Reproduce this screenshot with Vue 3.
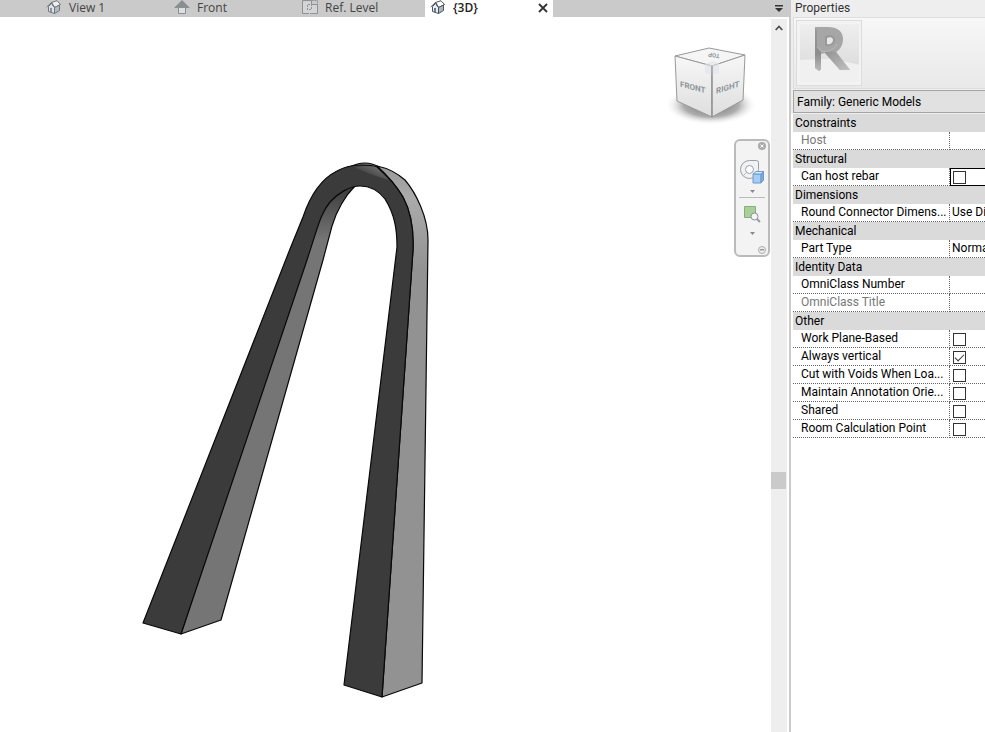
<script setup>
import { ref } from 'vue'

const tabs = [
  { name: 'View 1', icon: 'house' },
  { name: 'Front', icon: 'elevation' },
  { name: 'Ref. Level', icon: 'plan' },
  { name: '{3D}', icon: 'house' }
]
const active = ref('{3D}')

const groups = ref([
  { name: 'Constraints', rows: [{ label: 'Host', muted: true, text: '' }] },
  { name: 'Structural', rows: [{ label: 'Can host rebar', check: false, focused: true }] },
  { name: 'Dimensions', rows: [{ label: 'Round Connector Dimens...', text: 'Use Diameter' }] },
  { name: 'Mechanical', rows: [{ label: 'Part Type', text: 'Normal' }] },
  {
    name: 'Identity Data',
    rows: [
      { label: 'OmniClass Number', text: '' },
      { label: 'OmniClass Title', muted: true, text: '' }
    ]
  },
  {
    name: 'Other',
    rows: [
      { label: 'Work Plane-Based', check: false },
      { label: 'Always vertical', check: true },
      { label: 'Cut with Voids When Loa...', check: false },
      { label: 'Maintain Annotation Orie...', check: false },
      { label: 'Shared', check: false },
      { label: 'Room Calculation Point', check: false }
    ]
  }
])
const idFor = (label) => 'prop-' + label.toLowerCase().replace(/[^a-z]+/g, '-')
</script>

<template>
  <div class="app">
    <main class="workspace">
      <nav class="tabs">
        <button
          v-for="tab in tabs"
          :key="tab.name"
          type="button"
          class="tab"
          :class="{ active: tab.name === active }"
          @click="active = tab.name"
        >
          <svg v-if="tab.icon === 'house'" class="tab-icon" viewBox="0 0 16 15">
            <path d="M2.500 6.500 5.500 3.500 8.500 7.500V13.500L2.500 11.500Z" fill="#e9edf1" stroke="#4c535b" />
            <path d="M5.500 2.500 11 .7 14.500 4.500 8.500 7.500Z" fill="#fff" stroke="#4c535b" stroke-linejoin="round" />
            <path d="M8.500 7.500 13.500 5V10.500L8.500 13.500Z" fill="#a9b6c7" stroke="#4c535b" stroke-linejoin="round" />
            <path d="M.7 7 5.500 2.500 8.500 7.500" fill="none" stroke="#4c535b" />
            <path d="M4 8H6V12.500L4 12Z" fill="#6c7d93" />
          </svg>
          <svg v-else-if="tab.icon === 'elevation'" class="tab-icon" viewBox="0 0 16 15">
            <path d="M8 0 16 8H0Z" fill="#70747b" />
            <path d="M4.500 7.500H11.500V13.500H4.500Z" fill="#e6e8ea" stroke="#70747b" />
          </svg>
          <svg v-else class="tab-icon" viewBox="0 0 16 15">
            <path d="M.5 1.500H9.500V4.500H15.500V13.500H.5Z" fill="#d9dadb" />
            <path d="M5 .5H.5V13.500H5M5 .5H9.500V4.500H15.500V13.500H9.500" fill="none" stroke="#777b80" />
            <path d="M5 13.500H9.500M5.500 10V4.500H9.500V9.500H5.500M9.500 .5H15.500V4.500" fill="none" stroke="#777b80" stroke-dasharray="2 1" />
          </svg>
          <span>{{ tab.name }}</span>
          <svg v-if="tab.name === active" class="close" viewBox="0 0 10 10">
            <path d="M1 1 9 9M9 1 1 9" stroke="#333" stroke-width="1.800" />
          </svg>
        </button>
        <button type="button" class="tab-list" aria-label="Tabs">
          <svg viewBox="0 0 10 8"><path d="M1 0H9V1.500H1ZM1 3H9L5 7Z" fill="#333" /></svg>
        </button>
      </nav>

      <div class="view">
        <div class="canvas">
          <svg class="model" viewBox="0 17 440 700">
            <defs>
              <linearGradient id="inner" x1="0" y1="187" x2="0" y2="240" gradientUnits="userSpaceOnUse">
                <stop offset="0" stop-color="#3a3a3a" />
                <stop offset=".35" stop-color="#505050" />
                <stop offset="1" stop-color="#757575" />
              </linearGradient>
              <linearGradient id="outer" x1="0" y1="166" x2="0" y2="270" gradientUnits="userSpaceOnUse">
                <stop offset="0" stop-color="#999" />
                <stop offset=".3" stop-color="#ababab" />
                <stop offset="1" stop-color="#929292" />
              </linearGradient>
              <linearGradient id="crown" x1="374" y1="166" x2="368" y2="178" gradientUnits="userSpaceOnUse">
                <stop offset="0" stop-color="#6c6c6c" />
                <stop offset="1" stop-color="#3b3b3b" />
              </linearGradient>
            </defs>
            <g stroke="#080808" stroke-width="1.200" stroke-linejoin="round">
              <path d="M181 634 221 620 323 260 332 226C337 210 343 198 355 186L340 190 315 215Z" fill="url(#inner)" />
              <path d="M377 166C387 168 397 173 405 180C416 193 428 217 428 240L422 683 382 697 413 250C414 228 411 212 403 197C397 187 389 177 377 166Z" fill="url(#outer)" />
              <path d="M350 167Q365 159 379 167Z" fill="#777" />
              <path
                d="M143 623 290 249 303 217C311 193 323 178 337 171C344 167 350 165 362 165Q372 165 377 167C389 177 397 187 403 197C411 212 414 228 413 250L382 697 344 685 397 247C397 230 395 215 385 199C378 190 370 186 360 186C350 186 338 193 330 202C321 213 319 223 307 260L181 634Z"
                fill="#3b3b3b"
              />
            </g>
            <path d="M354 167Q366 165 376 167L389 180Q368 174 354 167Z" fill="url(#crown)" />
          </svg>

          <svg class="cube" viewBox="660 40 100 90">
            <defs>
              <radialGradient id="shade">
                <stop offset="0" stop-color="#666" />
                <stop offset=".6" stop-color="#999" stop-opacity=".8" />
                <stop offset="1" stop-color="#fff" stop-opacity="0" />
              </radialGradient>
              <linearGradient id="face" x2="0" y2="1">
                <stop offset="0" stop-color="#f7f7f8" />
                <stop offset="1" stop-color="#dedede" />
              </linearGradient>
            </defs>
            <ellipse cx="711" cy="105" rx="46" ry="20" fill="url(#shade)" />
            <g stroke="#999" stroke-linejoin="round">
              <path d="M675 56 709 48 745 55 712 66Z" fill="#f5f5f6" />
              <path d="M675 56 712 66V117L677 101Z" fill="url(#face)" />
              <path d="M745 55 712 66V117L743 100Z" fill="url(#face)" />
            </g>
            <path d="M705 64 712 61 719 63V73L712 75 705 73Z" fill="#dfe3e8" opacity=".6" />
            <path d="M712 66V117" stroke="#888" />
            <g class="cube-text">
              <text x="-13" transform="translate(693 90) skewY(14)">FRONT</text>
              <text x="-12" transform="translate(728 90) skewY(-17)">RIGHT</text>
              <text class="small" transform="translate(720 54) rotate(188)">TOP</text>
            </g>
          </svg>

          <div class="navbar">
            <button type="button" class="round" aria-label="Close">
              <svg viewBox="0 0 8 8"><circle cx="4" cy="4" r="4" fill="#aaa" /><path d="M2.500 2.500 5.500 5.500M5.500 2.500 2.500 5.500" stroke="#fff" /></svg>
            </button>
            <button type="button" class="tool" aria-label="Wheel">
              <svg class="wheel" viewBox="0 0 26 26">
                <path d="M10.500 1.500H17.500Q19.500 1.500 19.500 3.500V10.500A9 9 0 1 1 10.500 1.500Z" fill="#f1f2f4" stroke="#9a9da3" />
                <circle cx="10.500" cy="10.500" r="4" fill="#fff" stroke="#9a9da3" />
                <path d="M4 17 7.500 13.500M13.500 13.500 16 16" stroke="#b7babf" />
                <path d="M14 15H22V24H14Z" fill="#a9cdf1" stroke="#6a9bd0" />
                <path d="M14 15 17 12.500H24.500L22 15Z" fill="#d8eafb" stroke="#6a9bd0" />
                <path d="M22 15 24.500 12.500V21L22 24Z" fill="#78aade" stroke="#6a9bd0" />
              </svg>
              <svg class="caret" viewBox="0 0 5 3"><path d="M0 0H5L2.500 3Z" fill="#888" /></svg>
            </button>
            <hr />
            <button type="button" class="tool" aria-label="Zoom">
              <svg class="zoom" viewBox="0 0 18 18">
                <path d="M1.500 1.500H12.500V12.500H1.500Z" fill="#a9cf9c" stroke="#86ae79" />
                <path d="M13 13 17 17" stroke="#999" stroke-width="2" />
                <circle cx="11.500" cy="11.500" r="3.500" fill="#f3f6f8" stroke="#8e9296" />
              </svg>
              <svg class="caret" viewBox="0 0 5 3"><path d="M0 0H5L2.500 3Z" fill="#888" /></svg>
            </button>
            <button type="button" class="round last" aria-label="Options">
              <svg viewBox="0 0 8 8"><circle cx="4" cy="4" r="3.500" fill="#eee" stroke="#aaa" /><path d="M2 3H6V4.500H2Z" fill="#999" /></svg>
            </button>
          </div>
        </div>
        <div class="scrollbar">
          <svg viewBox="0 0 8 6"><path d="M.7 5 4 1.500 7.300 5" fill="none" stroke="#505050" stroke-width="1.800" /></svg>
          <span class="thumb"></span>
        </div>
      </div>
    </main>

    <aside class="panel">
      <h2>Properties</h2>
      <div class="type">
        <div class="tile">
          <svg viewBox="0 0 60 60">
            <defs>
              <linearGradient id="wall" x2="0" y2="1">
                <stop offset="0" stop-color="#eee" />
                <stop offset="1" stop-color="#dedede" />
              </linearGradient>
              <linearGradient id="stem" x2="0" y2="1">
                <stop offset="0" stop-color="#999" />
                <stop offset=".6" stop-color="#8d8d8d" />
                <stop offset="1" stop-color="#bbb" />
              </linearGradient>
              <linearGradient id="leg" x2="1" y2="1">
                <stop offset="0" stop-color="#929292" />
                <stop offset="1" stop-color="#c2c2c2" />
              </linearGradient>
            </defs>
            <path d="M1 1H60V42L34 36 1 37Z" fill="url(#wall)" />
            <path d="M1 37 34 36 60 42V59H1Z" fill="#f0f0f0" />
            <path d="M16 4 22 10V46L20 48 16 45Z" fill="url(#stem)" />
            <path d="M16 4H29C38 4 44 8 44 16C44 22 41 27 37 29L51 47H41L26 30 22 31V46L20 48V27L18 24V8Z" fill="#a6a6a6" />
            <path d="M16 5 18 8V24L22 29V46L20 48 16 45Z" fill="url(#stem)" />
            <path d="M27 28 37 29 51 47H41L26 30Z" fill="url(#leg)" />
            <path d="M26 13C32 11 36 13 36 17C36 21 31 24 26 23Z" fill="#999" />
            <path d="M28 15C32 13 34 15 34 17C34 20 31 22 28 21Z" fill="#e8e8e8" />
            <path d="M18 24Q22 30 30 28Q36 26 38 21" fill="none" stroke="#b9b9b9" />
          </svg>
        </div>
      </div>
      <div class="family">Family: Generic Models</div>
      <table>
        <colgroup><col class="name-col" /><col /></colgroup>
        <tbody v-for="group in groups" :key="group.name">
          <tr class="group"><th colspan="2">{{ group.name }}</th></tr>
          <tr v-for="row in group.rows" :key="row.label">
            <td class="name" :class="{ muted: row.muted }">
              <label v-if="'check' in row" :for="idFor(row.label)">{{ row.label }}</label>
              <template v-else>{{ row.label }}</template>
            </td>
            <td class="value" :class="{ focused: row.focused }">
              <input v-if="'check' in row" :id="idFor(row.label)" v-model="row.check" type="checkbox" />
              <template v-else>{{ row.text }}</template>
            </td>
          </tr>
        </tbody>
      </table>
    </aside>
  </div>
</template>

<style>
body {
  background: #fff;
}
</style>

<style scoped>
.app {
  display: grid;
  grid-template-columns: minmax(0, 1fr) 196px;
  min-height: 100vh;
  overflow: hidden;
  font: 12px/16px "Open Sans", "Noto Sans", sans-serif;
  color: #000;
}
button {
  border: 0;
  margin: 0;
  padding: 0;
  background: none;
  font: inherit;
  color: inherit;
}
svg {
  display: block;
  flex: none;
}
.workspace {
  display: flex;
  flex-direction: column;
}
.tabs {
  display: flex;
  height: 17px;
  padding-left: 41px;
  background: #cacaca;
}
.tab {
  display: flex;
  align-items: flex-start;
  gap: 7px;
  width: 128px;
  padding: 0 5px;
  color: #444;
}
.tab span {
  flex: 1;
  text-align: left;
  line-height: 15px;
}
.tab-icon {
  width: 16px;
  height: 15px;
  opacity: .7;
}
.active {
  background: #fff;
  color: #222;
  font-weight: 600;
}
.active .tab-icon {
  opacity: 1;
}
.close {
  width: 10px;
  height: 10px;
  margin-top: 3px;
}
.tab-list {
  margin-left: auto;
  padding: 0 5px;
}
.tab-list svg {
  width: 10px;
  height: 8px;
}
.view {
  display: flex;
  flex: 1;
}
.canvas {
  position: relative;
  flex: 1;
}
.model {
  width: 440px;
  height: 700px;
}
.cube {
  position: absolute;
  top: 23px;
  right: 11px;
  width: 100px;
  height: 90px;
}
.cube-text {
  font: bold 8px Roboto, sans-serif;
  fill: #8f959b;
}
.cube-text .small {
  font-size: 6px;
}
.navbar {
  position: absolute;
  top: 122px;
  right: 1px;
  box-sizing: border-box;
  display: flex;
  flex-direction: column;
  align-items: center;
  width: 36px;
  height: 118px;
  padding: 0 1px;
  border: 2px solid #bababa;
  border-radius: 6px;
  background: #f3f3f3;
}
.round {
  align-self: flex-end;
  padding: 1px;
}
.round svg {
  width: 8px;
  height: 8px;
}
.last {
  margin-top: auto;
}
.tool {
  display: flex;
  flex-direction: column;
  align-items: center;
  gap: 5px;
}
.wheel {
  width: 26px;
  height: 26px;
  margin-top: 8px;
}
.zoom {
  width: 18px;
  height: 18px;
}
.tool .zoom + .caret {
  margin-top: 4px;
}
.caret {
  width: 5px;
  height: 3px;
}
hr {
  width: 26px;
  margin: 4px 0 7px;
  border: 0;
  border-top: 1px solid #bbb;
}
.scrollbar {
  display: flex;
  flex-direction: column;
  align-items: center;
  width: 16px;
  margin: 2px 2px 0 0;
  background: #eee;
}
.scrollbar svg {
  width: 8px;
  height: 6px;
  margin-top: 6px;
}
.thumb {
  width: 15px;
  height: 17px;
  margin-top: auto;
  margin-bottom: 243px;
  align-self: flex-start;
  background: #cacaca;
}
.panel {
  overflow: hidden;
  padding-left: 2px;
  border-left: 2px solid #cacaca;
  background: linear-gradient(#eee 114px, #fff 114px);
}
h2 {
  margin: 0;
  padding-left: 2px;
  height: 17px;
  font: 12px/16px Roboto, "Open Sans", sans-serif;
  color: #333;
}
.type {
  padding: 2px;
  border: 1px solid #dedede;
  border-right: 0;
  background: linear-gradient(#f7f7f7, #e9e9e9);
}
.tile {
  box-sizing: border-box;
  width: 66px;
  height: 66px;
  padding: 2px;
  border: 1px solid #dcdcdc;
  background: #f3f3f3;
}
.tile svg {
  width: 60px;
  height: 60px;
}
.family,
table {
  font-family: Roboto, "Open Sans", sans-serif;
}
.family {
  box-sizing: border-box;
  height: 23px;
  margin: 1px 0;
  padding: 3px;
  border: 1px solid #a5a5a5;
  border-right: 0;
  background: #e1e1e1;
}
table {
  width: 100%;
  table-layout: fixed;
  border-collapse: separate;
  border-spacing: 0;
}
.name-col {
  width: 157px;
}
th,
td {
  box-sizing: border-box;
  height: 18px;
  padding: 0;
  overflow: hidden;
  white-space: nowrap;
  font-weight: 400;
  text-align: left;
  vertical-align: top;
}
th {
  padding: 1px 0 0 2px;
  background: #dadada;
}
td {
  border-bottom: 1px dotted #666;
  background: #fff;
}
.name {
  padding-left: 8px;
  border-right: 1px dotted #666;
}
.muted {
  color: #777;
}
.value {
  padding-left: 2px;
}
.focused {
  border: 1px solid #000;
  border-right: 0;
}
input {
  appearance: none;
  display: block;
  box-sizing: border-box;
  width: 13px;
  height: 13px;
  margin: 3px 0 0 1px;
  border: 1px solid #333;
  background: #fff;
}
.focused input {
  margin: 2px 0 0;
}
input:checked::before {
  content: "";
  display: block;
  box-sizing: border-box;
  width: 9px;
  height: 5px;
  margin: 2px 0 0 1px;
  border: solid #333;
  border-width: 0 0 1px 1px;
  transform: rotate(-45deg);
}
</style>
